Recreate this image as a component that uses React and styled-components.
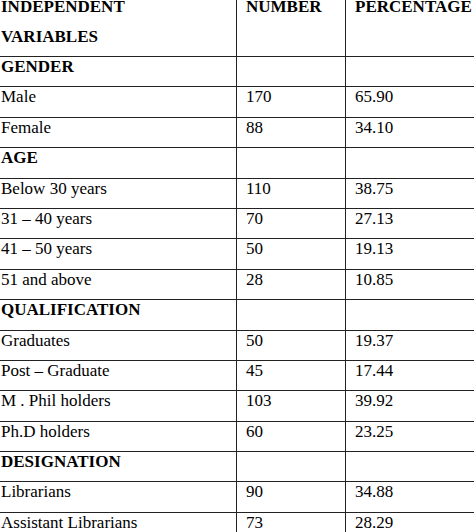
import React from 'react';
import styled, { createGlobalStyle } from 'styled-components';

const GlobalStyle = createGlobalStyle`
  html, body {
    margin: 0;
    padding: 0;
    background: #ffffff;
    overflow: hidden;
  }
`;

const Sheet = styled.div`
  margin: -8px 0 0 -9px;
  width: 540px;
  font-family: "Liberation Serif", "Times New Roman", serif;
  font-size: 17px;
  color: #000;
`;

const Row = styled.div`
  display: grid;
  grid-template-columns: 245px 109px 1fr;
  box-sizing: border-box;
  height: ${({ $head }) => ($head ? '64px' : '30.4px')};
  border-top: ${({ $head }) => ($head ? 'none' : '1px solid #222')};
  line-height: ${({ $head }) => ($head ? '29.7px' : 'normal')};
  font-weight: ${({ $bold }) => ($bold ? 700 : 400)};
`;

const Cell = styled.div`
  padding-left: 9px;
  border-left: 1px solid #222;
  white-space: nowrap;
  overflow: hidden;
`;

const groups = [
  {
    title: 'GENDER',
    rows: [
      ['Male', '170', '65.90'],
      ['Female', '88', '34.10'],
    ],
  },
  {
    title: 'AGE',
    rows: [
      ['Below 30 years', '110', '38.75'],
      ['31 – 40 years', '70', '27.13'],
      ['41 – 50 years', '50', '19.13'],
      ['51 and above', '28', '10.85'],
    ],
  },
  {
    title: 'QUALIFICATION',
    rows: [
      ['Graduates', '50', '19.37'],
      ['Post – Graduate', '45', '17.44'],
      ['M . Phil holders', '103', '39.92'],
      ['Ph.D holders', '60', '23.25'],
    ],
  },
  {
    title: 'DESIGNATION',
    rows: [
      ['Librarians', '90', '34.88'],
      ['Assistant Librarians', '73', '28.29'],
    ],
  },
];

const App = () => {
  return (
    <>
      <GlobalStyle />
      <Sheet>
        <Row $head $bold>
          <Cell>
            INDEPENDENT
            <br />
            VARIABLES
          </Cell>
          <Cell>NUMBER</Cell>
          <Cell>PERCENTAGE</Cell>
        </Row>
        {groups.map((g) => (
          <React.Fragment key={g.title}>
            <Row $bold>
              <Cell>{g.title}</Cell>
              <Cell />
              <Cell />
            </Row>
            {g.rows.map(([label, num, pct]) => (
              <Row key={label}>
                <Cell>{label}</Cell>
                <Cell>{num}</Cell>
                <Cell>{pct}</Cell>
              </Row>
            ))}
          </React.Fragment>
        ))}
        <Row>
          <Cell />
          <Cell />
          <Cell />
        </Row>
      </Sheet>
    </>
  );
};

export default App;
